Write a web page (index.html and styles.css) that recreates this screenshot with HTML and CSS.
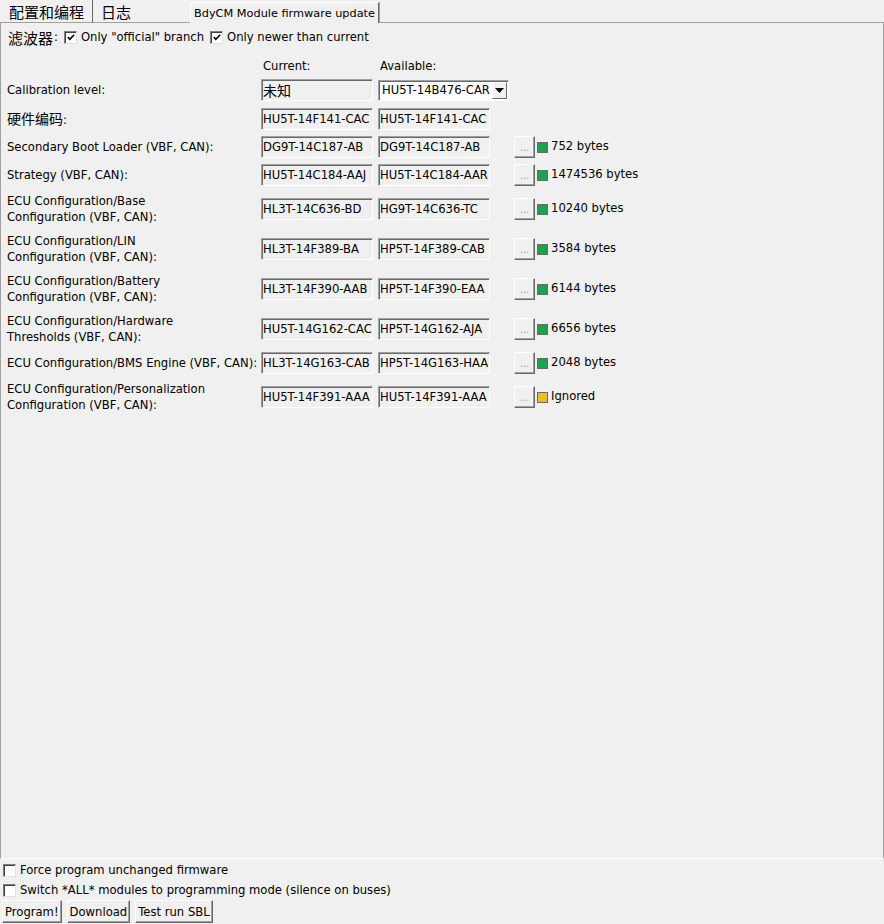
FILE: index.html
```html
<!DOCTYPE html>
<html>
<head>
<meta charset="utf-8">
<link rel="stylesheet" href="styles.css">
</head>
<body>
<div class="app">
  <div class="tabs">
    <div class="tab tab1"><span class="cjk">配置和编程</span></div>
    <div class="tab tab2"><span class="cjk">日志</span></div>
    <div class="tab sel">BdyCM Module firmware update</div>
    <div class="tabrest"></div>
  </div>
  <div class="panel">
    <div class="filter">
      <span class="cjk">滤波器</span><span class="colon">:</span>
      <span class="cb checked"><svg width="11" height="11" viewBox="0 0 11 11"><path d="M2 5 L4.2 7.5 L9 2.5" fill="none" stroke="#000" stroke-width="1.8"/></svg></span>
      <span class="cbl">Only "official" branch</span>
      <span class="cb checked"><svg width="11" height="11" viewBox="0 0 11 11"><path d="M2 5 L4.2 7.5 L9 2.5" fill="none" stroke="#000" stroke-width="1.8"/></svg></span>
      <span class="cbl">Only newer than current</span>
    </div>
    <div class="rows">
      <div class="row head">
        <div class="lab"></div>
        <div class="hcell">Current:</div>
        <div class="hcell">Available:</div>
      </div>
      <div class="row">
        <div class="lab">Calibration level:</div>
        <div class="entry"><span class="cjk2">未知</span></div>
        <div class="cell2"><div class="combo"><span class="ctext">HU5T-14B476-CAR</span><span class="cbtn"><svg width="9" height="5" viewBox="0 0 9 5"><path d="M0 0 H9 L4.5 5 Z" fill="#000"/></svg></span></div></div>
      </div>
      <div class="row r29">
        <div class="lab"><span class="cjk2">硬件编码</span>:</div>
        <div class="entry">HU5T-14F141-CAC</div>
        <div class="cell2"><div class="entry">HU5T-14F141-CAC</div></div>
      </div>
      <div class="row">
        <div class="lab">Secondary Boot Loader (VBF, CAN):</div>
        <div class="entry">DG9T-14C187-AB</div>
        <div class="cell2"><div class="entry">DG9T-14C187-AB</div></div>
        <div class="dots">...</div><span class="sq green"></span><span class="size">752 bytes</span>
      </div>
      <div class="row">
        <div class="lab">Strategy (VBF, CAN):</div>
        <div class="entry">HU5T-14C184-AAJ</div>
        <div class="cell2"><div class="entry">HU5T-14C184-AAR</div></div>
        <div class="dots">...</div><span class="sq green"></span><span class="size">1474536 bytes</span>
      </div>
      <div class="row tall">
        <div class="lab">ECU Configuration/Base<br>Configuration (VBF, CAN):</div>
        <div class="entry">HL3T-14C636-BD</div>
        <div class="cell2"><div class="entry">HG9T-14C636-TC</div></div>
        <div class="dots">...</div><span class="sq green"></span><span class="size">10240 bytes</span>
      </div>
      <div class="row tall">
        <div class="lab">ECU Configuration/LIN<br>Configuration (VBF, CAN):</div>
        <div class="entry">HL3T-14F389-BA</div>
        <div class="cell2"><div class="entry">HP5T-14F389-CAB</div></div>
        <div class="dots">...</div><span class="sq green"></span><span class="size">3584 bytes</span>
      </div>
      <div class="row tall">
        <div class="lab">ECU Configuration/Battery<br>Configuration (VBF, CAN):</div>
        <div class="entry">HL3T-14F390-AAB</div>
        <div class="cell2"><div class="entry">HP5T-14F390-EAA</div></div>
        <div class="dots">...</div><span class="sq green"></span><span class="size">6144 bytes</span>
      </div>
      <div class="row tall">
        <div class="lab">ECU Configuration/Hardware<br>Thresholds (VBF, CAN):</div>
        <div class="entry">HU5T-14G162-CAC</div>
        <div class="cell2"><div class="entry">HP5T-14G162-AJA</div></div>
        <div class="dots">...</div><span class="sq green"></span><span class="size">6656 bytes</span>
      </div>
      <div class="row">
        <div class="lab">ECU Configuration/BMS Engine (VBF, CAN):</div>
        <div class="entry">HL3T-14G163-CAB</div>
        <div class="cell2"><div class="entry">HP5T-14G163-HAA</div></div>
        <div class="dots">...</div><span class="sq green"></span><span class="size">2048 bytes</span>
      </div>
      <div class="row tall">
        <div class="lab">ECU Configuration/Personalization<br>Configuration (VBF, CAN):</div>
        <div class="entry">HU5T-14F391-AAA</div>
        <div class="cell2"><div class="entry">HU5T-14F391-AAA</div></div>
        <div class="dots">...</div><span class="sq yellow"></span><span class="size">Ignored</span>
      </div>
    </div>
  </div>
  <div class="bottom">
    <div class="opt"><span class="cb"></span><span class="cbl">Force program unchanged firmware</span></div>
    <div class="opt"><span class="cb"></span><span class="cbl">Switch *ALL* modules to programming mode (silence on buses)</span></div>
    <div class="buttons">
      <div class="btn">Program!</div>
      <div class="btn">Download</div>
      <div class="btn">Test run SBL</div>
    </div>
  </div>
</div>
</body>
</html>
```
FILE: styles.css
```css
html, body {
  margin: 0;
  padding: 0;
  background: #f0f0f0;
}
body {
  font-family: "DejaVu Sans", "Noto Sans CJK SC", sans-serif;
  font-size: 11.6px;
  color: #000;
  width: 884px;
  height: 924px;
  overflow: hidden;
}
.app {
  display: flex;
  flex-direction: column;
  height: 924px;
}
.cjk {
  font-family: "Noto Sans CJK SC", sans-serif;
  font-size: 15px;
}
.cjk2 {
  font-family: "Noto Sans CJK SC", sans-serif;
  font-size: 14px;
}
.tabs {
  display: flex;
  height: 23px;
  flex: none;
}
.tab {
  box-sizing: border-box;
  display: flex;
  align-items: center;
  border-bottom: 1px solid #a0a0a0;
}
.tab1 {
  width: 93px;
  padding-left: 9px;
  border-right: 1px solid #696969;
}
.tab2 {
  width: 97px;
  padding-left: 8px;
}
.tab.sel {
  width: 189px;
  margin-top: 2px;
  height: 21px;
  padding-left: 3px;
  border-bottom: none;
  border-top: 1px solid #fff;
  border-left: 1px solid #fff;
  border-right: 1px solid #696969;
  box-shadow: 1px 0 0 #a0a0a0;
  padding-top: 1px;
  white-space: nowrap;
  font-size: 11.3px;
}
.tabrest {
  flex: 1;
  border-bottom: 1px solid #a0a0a0;
  margin-left: 1px;
}
.panel {
  flex: 1;
  border-left: 1px solid #a0a0a0;
  border-right: 1px solid #a0a0a0;
  border-bottom: 1px solid #fff;
}
.filter {
  display: flex;
  align-items: center;
  height: 26px;
  padding-left: 7px;
  margin-top: 1px;
}
.colon { margin-right: 6px; margin-left: 1px; }
.cb {
  box-sizing: border-box;
  width: 13px;
  height: 13px;
  background: #fff;
  border-top: 1px solid #808080;
  border-left: 1px solid #808080;
  border-right: 1px solid #e0e0e0;
  border-bottom: 1px solid #e0e0e0;
  box-shadow: inset 1px 1px 0 #404040;
  display: inline-flex;
  align-items: center;
  justify-content: center;
  flex: none;
}
.cb svg { margin-left: 1px; margin-top: 1px; }
.cbl { margin-left: 4px; margin-right: 6px; }
.rows {
  display: flex;
  flex-direction: column;
  padding-left: 6px;
  margin-top: 7px;
}
.row {
  display: flex;
  align-items: center;
  height: 28px;
}
.row.head {
  box-sizing: border-box;
  height: 19px;
  padding-bottom: 2px;
  align-items: flex-end;
}
.row.r29 { height: 29px; }
.row.tall { height: 40px; }
.lab {
  width: 254px;
  flex: none;
  line-height: 16px;
  white-space: nowrap;
}
.hcell {
  width: 117px;
  padding-left: 2px;
  box-sizing: border-box;
  line-height: 16px;
}
.entry {
  box-sizing: border-box;
  width: 112px;
  height: 22px;
  flex: none;
  display: flex;
  align-items: center;
  padding-left: 1px;
  background: #f0f0f0;
  border-top: 1px solid #a0a0a0;
  border-left: 1px solid #a0a0a0;
  border-right: 1px solid #fff;
  border-bottom: 1px solid #fff;
  box-shadow: inset 1px 1px 0 #696969;
  white-space: nowrap;
  overflow: hidden;
}
.cell2 {
  width: 112px;
  margin-left: 5px;
  flex: none;
}
.combo {
  box-sizing: border-box;
  width: 131px;
  height: 21px;
  display: flex;
  align-items: center;
  background: #fff;
  border-top: 1px solid #a0a0a0;
  border-left: 1px solid #a0a0a0;
  border-right: 1px solid #fff;
  border-bottom: 1px solid #fff;
  box-shadow: inset 1px 1px 0 #696969;
  padding-left: 3px;
  white-space: nowrap;
}
.ctext { flex: 1; }
.cbtn {
  box-sizing: border-box;
  width: 15px;
  height: 17px;
  margin-right: 1px;
  background: #f0f0f0;
  border-top: 1px solid #fff;
  border-left: 1px solid #fff;
  border-right: 1px solid #696969;
  border-bottom: 1px solid #696969;
  display: flex;
  align-items: center;
  justify-content: center;
  flex: none;
}
.dots {
  box-sizing: border-box;
  width: 21px;
  height: 22px;
  margin-left: 24px;
  flex: none;
  color: #a0a0a0;
  border-top: 1px solid #fff;
  border-left: 1px solid #fff;
  border-right: 1px solid #696969;
  border-bottom: 1px solid #696969;
  box-shadow: inset -1px -1px 0 #a0a0a0;
  display: flex;
  align-items: flex-end;
  justify-content: center;
  padding-bottom: 4px;
  font-size: 10px;
}
.sq {
  box-sizing: border-box;
  width: 11px;
  height: 11px;
  margin-left: 2px;
  border: 1px solid #696969;
  flex: none;
}
.green { background: #1aa24c; }
.yellow { background: #e6c417; }
.size { margin-left: 3px; margin-top: -2px; white-space: nowrap; }
.bottom {
  flex: none;
  padding-top: 1px;
}
.opt {
  display: flex;
  align-items: center;
  height: 20px;
  padding-left: 3px;
}
.buttons {
  display: flex;
  gap: 5px;
  padding-left: 2px;
  height: 24px;
  align-items: flex-start;
}
.btn {
  box-sizing: border-box;
  height: 23px;
  padding: 0 2px;
  display: flex;
  align-items: center;
  border-top: 1px solid #fff;
  border-left: 1px solid #fff;
  border-right: 1px solid #696969;
  border-bottom: 1px solid #696969;
  box-shadow: inset -1px -1px 0 #a0a0a0;
  white-space: nowrap;
}
```
